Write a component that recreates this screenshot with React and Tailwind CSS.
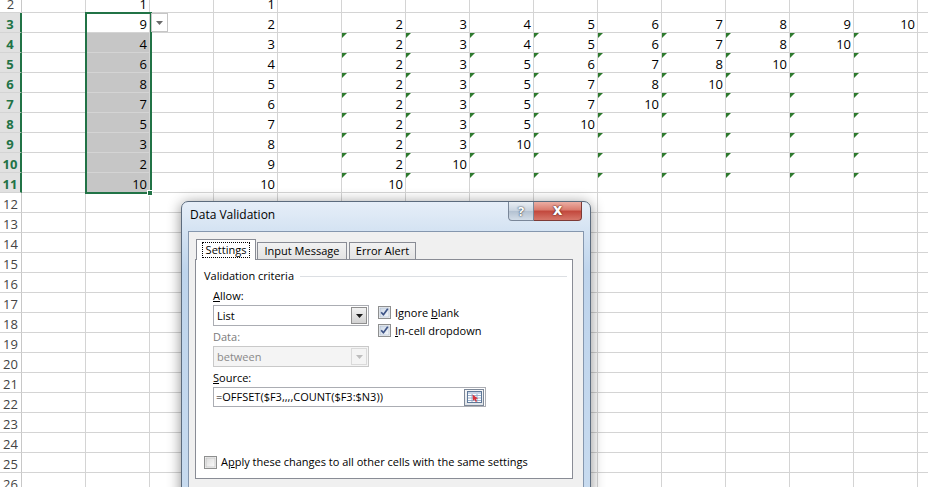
import React from 'react';

const COLS = ['A', 'B', 'C', 'D', 'E', 'F', 'G', 'H', 'I', 'J', 'K', 'L', 'M', 'N', 'O'];
const ROWS = Array.from({ length: 25 }, (_, i) => i + 2);
const DATA = {
  2: { B: 1, D: 1 },
  3: { B: 9, D: 2, F: 2, G: 3, H: 4, I: 5, J: 6, K: 7, L: 8, M: 9, N: 10 },
  4: { B: 4, D: 3, F: 2, G: 3, H: 4, I: 5, J: 6, K: 7, L: 8, M: 10 },
  5: { B: 6, D: 4, F: 2, G: 3, H: 5, I: 6, J: 7, K: 8, L: 10 },
  6: { B: 8, D: 5, F: 2, G: 3, H: 5, I: 7, J: 8, K: 10 },
  7: { B: 7, D: 6, F: 2, G: 3, H: 5, I: 7, J: 10 },
  8: { B: 5, D: 7, F: 2, G: 3, H: 5, I: 10 },
  9: { B: 3, D: 8, F: 2, G: 3, H: 10 },
  10: { B: 2, D: 9, F: 2, G: 10 },
  11: { B: 10, D: 10, F: 10 },
};
const TRI = new Set(['F', 'G', 'H', 'I', 'J', 'K', 'L', 'M', 'N']);

function Cell({ row, col }) {
  const value = DATA[row] ? DATA[row][col] : undefined;
  const shaded = col === 'B' && row >= 4 && row <= 11;
  const tri = TRI.has(col) && row >= 4 && row <= 11;
  return (
    <div
      className={`relative flex h-[20px] w-[64px] shrink-0 items-end justify-end border-r border-b border-[#d4d4d4] pr-[2px] ${
        shaded ? 'bg-[#c6c6c6]' : 'bg-white'
      }`}
    >
      {tri && (
        <span className="absolute left-0 top-0 h-[5px] w-[5px] bg-[#2e7a2e] [clip-path:polygon(0_0,100%_0,0_100%)]" />
      )}
      {value !== undefined && <span className="pb-[1px] leading-[14px]">{value}</span>}
    </div>
  );
}

function Row({ row }) {
  const sel = row >= 3 && row <= 11;
  return (
    <div className="flex h-[20px]">
      <div
        className={`flex h-[20px] w-[22px] shrink-0 items-end justify-center border-b border-[#d4d4d4] ${
          sel
            ? 'border-r-2 border-r-[#217346] bg-[#e1e1e1] font-bold text-[#217346]'
            : 'border-r border-r-[#c8c8c8] bg-white text-[#444]'
        }`}
      >
        <span className="pb-[1px] leading-[14px]">{row}</span>
      </div>
      {COLS.map((c) => (
        <Cell key={c} row={row} col={c} />
      ))}
    </div>
  );
}

function CheckBox({ checked }) {
  return (
    <svg width="13" height="13" viewBox="0 0 13 13" className="shrink-0">
      <defs>
        <linearGradient id={checked ? 'cbg1' : 'cbg0'} x1="0" y1="0" x2="1" y2="1">
          <stop offset="0" stopColor={checked ? '#cdd8e6' : '#dcdcdc'} />
          <stop offset="1" stopColor={checked ? '#f3f6fa' : '#fbfbfb'} />
        </linearGradient>
      </defs>
      <rect x="0.5" y="0.5" width="12" height="12" fill="#f4f4f4" stroke="#8e8f8f" />
      <rect x="2" y="2" width="9" height="9" fill={`url(#${checked ? 'cbg1' : 'cbg0'})`} stroke={checked ? '#a9b9cc' : '#b9b9b9'} strokeWidth="0.6" />
      {checked && (
        <path d="M3.2 6.2 L5.4 8.8 L9.8 2.8" fill="none" stroke="#3d5386" strokeWidth="1.7" strokeLinejoin="round" />
      )}
    </svg>
  );
}

function DropBtn({ disabled }) {
  return (
    <div
      className={`my-[1px] mr-[1px] flex w-[16px] items-center justify-center border ${
        disabled
          ? 'border-[#dadada] bg-[#f4f4f4]'
          : 'border-[#8f8f8f] bg-[linear-gradient(to_bottom,#f2f2f2,#d2d2d2)]'
      }`}
    >
      <svg width="7" height="4" viewBox="0 0 7 4">
        <path d="M0 0 H7 L3.5 4 Z" fill={disabled ? '#bdbdbd' : '#1a1a1a'} />
      </svg>
    </div>
  );
}

function Dialog() {
  return (
    <div className="absolute left-[181px] top-[201px] h-[300px] w-[410px] rounded-t-[7px] border border-[#5c6b7d] bg-[linear-gradient(to_bottom,#e6eef8_0px,#d6e4f3_26px,#bed4ec_70px,#c8dbef_300px)] font-['Open_Sans',sans-serif] text-[11px] text-black shadow-[0_2px_14px_rgba(0,0,0,0.45)]">
      <div className="flex h-[29px] items-start">
        <span className="ml-[8px] mt-[5px] text-[12px] leading-[16px]">Data Validation</span>
        <div className="ml-auto mr-[8px] flex h-[19px]">
          <div className="flex w-[26px] items-center justify-center rounded-bl-[4px] border border-t-0 border-[#7a8799] bg-[linear-gradient(to_bottom,#e9eef4,#c7d2de_50%,#b3c1d1_51%,#d3dde8)] text-[13px] font-bold leading-none text-white [text-shadow:0_0_2px_#3a4656,0_0_1px_#3a4656]">
            ?
          </div>
          <div className="flex w-[48px] items-center justify-center rounded-br-[4px] border border-l-0 border-t-0 border-[#7d3a36] bg-[linear-gradient(to_bottom,#ebaea3,#d97a6d_45%,#c2473c_50%,#d6776a)] pb-[2px] font-['DejaVu_Sans',sans-serif] text-[15px] font-bold leading-none text-white [text-shadow:0_0_2px_#5a1e1a,0_0_1px_#5a1e1a]">
            x
          </div>
        </div>
      </div>
      <div className="mx-[6px] h-[262px] border border-[#8597ae] bg-[#f0f0f0] pt-[7px]">
        <div className="flex h-[20px] items-end pl-[6px]">
          <div className="relative z-10 -mb-px ml-[1px] flex h-[21px] w-[60px] items-center justify-center border border-b-0 border-[#898c95] bg-white">
            <span className="border border-dotted border-black px-[3px] leading-[14px]">Settings</span>
          </div>
          <div className="ml-[1px] flex h-[17px] w-[90px] items-center justify-center border border-b-0 border-[#898c95] bg-[linear-gradient(to_bottom,#f2f2f2,#e3e3e3)] leading-[14px]">
            Input Message
          </div>
          <div className="ml-[2px] flex h-[17px] w-[67px] items-center justify-center border border-b-0 border-[#898c95] bg-[linear-gradient(to_bottom,#f2f2f2,#e3e3e3)] leading-[14px]">
            Error Alert
          </div>
        </div>
        <div className="ml-[6px] flex h-[220px] w-[378px] flex-col border border-[#898c95] bg-white pt-[8px] pl-[8px]">
          <div className="flex h-[16px] items-center">
            <span className="leading-[16px]">Validation criteria</span>
            <div className="ml-[6px] mr-[5px] h-px flex-1 bg-[#dcdfe3]" />
          </div>
          <div className="ml-[9px] flex flex-col">
            <div className="mt-[4px] h-[16px] leading-[16px]">
              <span className="underline">A</span>llow:
            </div>
            <div className="mt-[1px] flex items-start">
              <div className="flex w-[156px] flex-col">
                <div className="flex h-[21px] border border-[#abadb3] bg-white">
                  <span className="flex-1 pl-[3px] leading-[19px]">List</span>
                  <DropBtn />
                </div>
                <div className="mt-[3px] h-[16px] leading-[16px] text-[#7b7b7b]">Data:</div>
                <div className="mt-[1px] flex h-[21px] border border-[#c9c9c9] bg-[#f4f4f4]">
                  <span className="flex-1 pl-[3px] leading-[19px] text-[#8a8a8a]">between</span>
                  <DropBtn disabled />
                </div>
              </div>
              <div className="ml-[9px] flex flex-col gap-[5px] pt-[1px]">
                <div className="flex h-[13px] items-center gap-[4px]">
                  <CheckBox checked />
                  <span className="leading-[14px]">
                    Ignore <span className="underline">b</span>lank
                  </span>
                </div>
                <div className="flex h-[13px] items-center gap-[4px]">
                  <CheckBox checked />
                  <span className="leading-[14px]">
                    <span className="underline">I</span>n-cell dropdown
                  </span>
                </div>
              </div>
            </div>
            <div className="mt-[3px] h-[16px] leading-[16px]">
              <span className="underline">S</span>ource:
            </div>
            <div className="mt-[1px] flex h-[20px] w-[273px] items-center border border-[#abadb3] bg-white">
              <span className="flex-1 pl-[2px] leading-[16px]">=OFFSET($F3,,,,COUNT($F3:$N3))</span>
              <div className="mr-[1px] flex h-[17px] w-[20px] items-center justify-center border border-[#7d8898] bg-[linear-gradient(to_bottom,#f6f6f6,#dfe3e8)]">
                <svg width="15" height="12" viewBox="0 0 15 12">
                  <rect x="0.5" y="0.5" width="14" height="11" fill="#ffffff" stroke="#5f7898" />
                  <rect x="1" y="1" width="13" height="2" fill="#c6d4e6" />
                  <path d="M1 4.5 H14 M1 7 H14 M1 9.5 H14 M5 3 V11 M10 3 V11" stroke="#8ea8c8" strokeWidth="0.9" />
                  <path d="M5.5 3.5 L11 7.5 L8.8 8 L10 10.3 L8.7 10.9 L7.6 8.6 L6 9.8 Z" fill="#d8323a" />
                </svg>
              </div>
            </div>
          </div>
          <div className="mt-[47px] flex h-[16px] items-center gap-[4px]">
            <CheckBox />
            <span className="leading-[16px]">
              A<span className="underline">p</span>ply these changes to all other cells with the same settings
            </span>
          </div>
        </div>
      </div>
    </div>
  );
}

export default function App() {
  return (
    <div className="relative h-[487px] w-[928px] overflow-hidden bg-white font-['Open_Sans',sans-serif] text-[13px] text-black">
      <div className="-mt-[7px] flex flex-col">
        {ROWS.map((r) => (
          <Row key={r} row={r} />
        ))}
      </div>
      {/* selection box */}
      <div className="pointer-events-none absolute left-[85px] top-[12px] h-[182px] w-[67px] border-2 border-[#217346]" />
      <div className="absolute left-[147px] top-[190px] h-[6px] w-[6px] border border-white bg-[#217346]" />
      {/* in-cell dropdown button */}
      <div className="absolute left-[151px] top-[13px] flex h-[19px] w-[17px] items-center justify-center border border-[#c6c6c6] bg-white">
        <svg width="7" height="4" viewBox="0 0 7 4">
          <path d="M0 0 H7 L3.5 4 Z" fill="#6a6a6a" />
        </svg>
      </div>
      <Dialog />
    </div>
  );
}
